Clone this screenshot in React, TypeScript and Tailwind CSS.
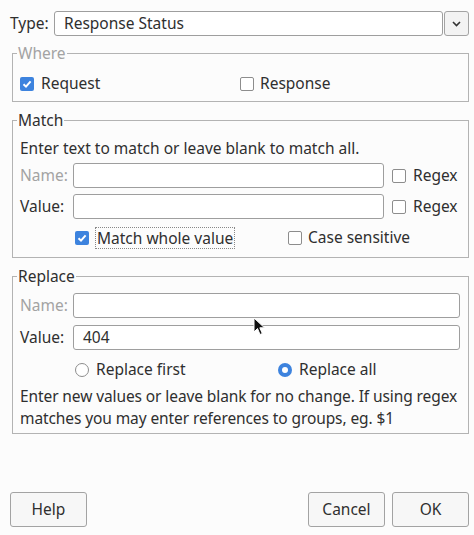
import React from "react";

function Check({ checked = false }: { checked?: boolean }) {
  if (checked) {
    return (
      <span className="flex h-[14px] w-[14px] shrink-0 items-center justify-center rounded-[2px] bg-[#3d83de]">
        <svg width="10" height="10" viewBox="0 0 10 10">
          <path d="M1.5 5.2 L4 7.6 L8.6 2.4" fill="none" stroke="#fff" strokeWidth="2" />
        </svg>
      </span>
    );
  }
  return <span className="h-[14px] w-[14px] shrink-0 rounded-[2px] border border-[#8d8d8d] bg-white" />;
}

function Radio({ checked = false }: { checked?: boolean }) {
  if (checked) {
    return (
      <span className="flex h-[14px] w-[14px] shrink-0 items-center justify-center rounded-full bg-[#3d83de]">
        <span className="h-[6px] w-[6px] rounded-full bg-white" />
      </span>
    );
  }
  return <span className="h-[14px] w-[14px] shrink-0 rounded-full border border-[#8d8d8d] bg-white" />;
}

function Field({ value = "" }: { value?: string }) {
  return (
    <div className="flex h-[25px] flex-1 items-center rounded-[3px] border border-[#9e9e9e] bg-white px-[9px]">
      {value}
    </div>
  );
}

function Group({ title, dim = false, children }: { title: string; dim?: boolean; children: React.ReactNode }) {
  return (
    <fieldset className="ml-[12px] mr-[5px] border border-[#b3b3b3] pl-[7px] pr-[8px]">
      <legend className={`-ml-[3px] px-[1px] leading-[20px] ${dim ? "text-[#a3a3a3]" : ""}`}>{title}</legend>
      {children}
    </fieldset>
  );
}

export default function App() {
  return (
    <div
      className="relative flex h-[535px] w-[474px] flex-col bg-[#fcfcfc] text-[15.5px] text-[#2f2f2f]"
      style={{ fontFamily: '"Noto Sans", "DejaVu Sans", sans-serif' }}
    >
      {/* type selector */}
      <div className="mt-[11px] mr-[5px] flex h-[25px] items-center">
        <span className="ml-[10px] w-[44px]">Type:</span>
        <div className="flex h-[25px] flex-1 items-center rounded-[3px] border border-[#9e9e9e] bg-white pl-[9px]">
          Response Status
        </div>
        <button className="ml-[1px] flex h-[25px] w-[25px] items-center justify-center rounded-[3px] border border-[#a3a3a3] bg-[#f3f3f3]">
          <svg width="9" height="6" viewBox="0 0 9 6">
            <path d="M1 1 L4.5 4.5 L8 1" fill="none" stroke="#333" strokeWidth="1.6" />
          </svg>
        </button>
      </div>

      <div className="mt-[7px]">
        <Group title="Where" dim>
          <div className="mt-[9px] mb-[9px] grid h-[20px] grid-cols-2 items-center">
            <label className="flex items-center gap-[7px]">
              <Check checked />
              Request
            </label>
            <label className="flex items-center gap-[6px]">
              <Check />
              Response
            </label>
          </div>
        </Group>
      </div>

      <div className="mt-[8px]">
        <Group title="Match">
          <p className="mt-[8px] leading-[20px]">Enter text to match or leave blank to match all.</p>
          <div className="mt-[5px] flex items-center">
            <span className="w-[53px] text-[#a3a3a3]">Name:</span>
            <Field />
            <label className="ml-[8px] flex w-[68px] shrink-0 items-center gap-[7px] whitespace-nowrap">
              <Check />
              Regex
            </label>
          </div>
          <div className="mt-[6px] flex items-center">
            <span className="w-[53px]">Value:</span>
            <Field />
            <label className="ml-[8px] flex w-[68px] shrink-0 items-center gap-[7px] whitespace-nowrap">
              <Check />
              Regex
            </label>
          </div>
          <div className="mt-[8px] mb-[8px] flex h-[22px] items-center pl-[55px]">
            <label className="flex w-[213px] items-center gap-[6px]">
              <Check checked />
              <span className="border border-dotted border-[#888] px-[1px] leading-[20px]">Match whole value</span>
            </label>
            <label className="flex items-center gap-[6px]">
              <Check />
              Case sensitive
            </label>
          </div>
        </Group>
      </div>

      <div className="mt-[8px]">
        <Group title="Replace">
          <div className="mt-[7px] flex items-center">
            <span className="w-[53px] text-[#a3a3a3]">Name:</span>
            <Field />
          </div>
          <div className="mt-[7px] flex items-center">
            <span className="w-[53px]">Value:</span>
            <Field value="404" />
          </div>
          <div className="mt-[8px] flex h-[24px] items-center pl-[55px]">
            <label className="flex w-[203px] items-center gap-[7px]">
              <Radio />
              Replace first
            </label>
            <label className="flex items-center gap-[7px]">
              <Radio checked />
              Replace all
            </label>
          </div>
          <p className="mt-[3px] mb-[4px] whitespace-nowrap leading-[22px] tracking-[-0.1px]">
            Enter new values or leave blank for no change. If using regex
            <br />
            matches you may enter references to groups, eg. $1
          </p>
        </Group>
      </div>

      <div className="mt-auto mb-[8px] mr-[5px] flex items-center">
        <button className="ml-[10px] h-[35px] w-[77px] rounded-[3px] border border-[#a3a3a3] bg-[#f7f7f7]">Help</button>
        <button className="ml-auto h-[35px] w-[77px] rounded-[3px] border border-[#a3a3a3] bg-[#f7f7f7]">Cancel</button>
        <button className="ml-[7px] h-[35px] w-[77px] rounded-[3px] border border-[#a3a3a3] bg-[#f7f7f7]">OK</button>
      </div>

      {/* mouse pointer */}
      <svg className="absolute left-[253px] top-[317px]" width="14" height="20" viewBox="0 0 14 20">
        <path d="M1 1 L1 15 L4.5 11.5 L7 17.5 L9.3 16.5 L6.8 10.8 L11.5 10.8 Z" fill="#111" stroke="#fff" strokeWidth="1" />
      </svg>
    </div>
  );
}
